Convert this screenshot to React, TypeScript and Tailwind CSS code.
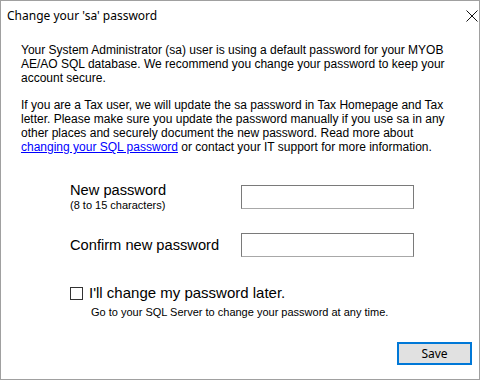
import React from "react";

const body = { fontFamily: '"Liberation Sans", Arial, sans-serif' };
const ui = { fontFamily: '"Noto Sans", "Liberation Sans", sans-serif' };

export default function App() {
  return (
    <div className="w-[483px] h-[381px] bg-white">
      <div className="w-[480px] h-[380px] border border-[#a0a0a0] bg-white flex flex-col text-black">
        {/* title bar */}
        <div className="h-[30px] flex items-center justify-between pl-[6px] pr-[1px]" style={ui}>
          <span className="text-[12px] leading-none">Change your 'sa' password</span>
          <svg width="12" height="12" viewBox="0 0 12 12">
            <path d="M0.5 0.5 L11.5 11.5 M11.5 0.5 L0.5 11.5" stroke="#111" strokeWidth="1" fill="none" />
          </svg>
        </div>

        {/* message */}
        <div className="pl-[20px] pt-[12px] text-[12px] leading-[14px] whitespace-nowrap" style={body}>
          <p>
            Your System Administrator (sa) user is using a default password for your MYOB
            <br />
            AE/AO SQL database. We recommend you change your password to keep your
            <br />
            account secure.
          </p>
          <p className="mt-[13px]">
            If you are a Tax user, we will update the sa password in Tax Homepage and Tax
            <br />
            letter. Please make sure you update the password manually if you use sa in any
            <br />
            other places and securely document the new password. Read more about
            <br />
            <a href="#" className="text-[#0000ff] underline">changing your SQL password</a> or contact your IT support for more information.
          </p>
        </div>

        {/* form */}
        <div className="pl-[69px] mt-[28px]" style={body}>
          <div className="flex items-start">
            <div className="w-[171px]">
              <div className="text-[14.67px] leading-[17px]">New password</div>
              <div className="text-[11px] leading-[13px]">(8 to 15 characters)</div>
            </div>
            <input
              type="password"
              className="mt-[3px] w-[173px] h-[24px] border border-[#7a7a7a] border-b-[#a8a8a8] bg-white outline-none"
            />
          </div>

          <div className="flex items-center mt-[21px]">
            <div className="w-[171px] text-[14.67px] leading-[17px]">Confirm new password</div>
            <input
              type="password"
              className="w-[173px] h-[24px] border border-[#7a7a7a] border-b-[#a8a8a8] bg-white outline-none"
            />
          </div>

          <label className="flex items-center mt-[27px]">
            <span className="w-[13px] h-[13px] border border-[#333333] bg-white shrink-0" />
            <span className="ml-[6px] text-[15px] leading-[18px]">I'll change my password later.</span>
          </label>
          <div className="ml-[21px] mt-[4px] text-[11px] leading-[13px]">
            Go to your SQL Server to change your password at any time.
          </div>
        </div>

        <div className="flex justify-end pr-[7px] mt-[23px]">
          <button
            className="w-[75px] h-[23px] bg-[#e1e1e1] border-2 border-[#0078d7] text-[12px] leading-none"
            style={ui}
          >
            Save
          </button>
        </div>
      </div>
    </div>
  );
}
